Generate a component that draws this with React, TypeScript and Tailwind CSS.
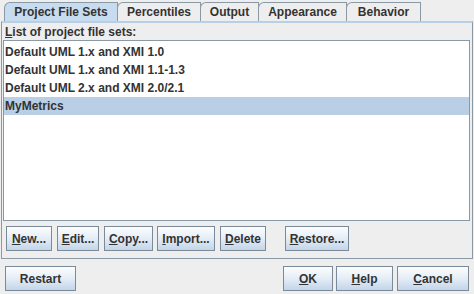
import React from "react";

const tabs = ["Project File Sets", "Percentiles", "Output", "Appearance", "Behavior"];
const tabWidths = [114, 84, 59, 89, 75];

const fileSets = [
  "Default UML 1.x and XMI 1.0",
  "Default UML 1.x and XMI 1.1-1.3",
  "Default UML 2.x and XMI 2.0/2.1",
  "MyMetrics",
];

function Btn({ label, mn, w, className = "" }: { label: string; mn: number; w: number; className?: string }) {
  return (
    <button
      style={{ width: w }}
      className={`h-[25px] shrink-0 border border-[#7a8a99] bg-gradient-to-b from-[#fbfdfe] via-[#e4edf6] to-[#c3d5e8] text-[12px] font-bold text-[#333333] flex items-center justify-center ${className}`}
    >
      {mn < 0 ? (
        label
      ) : (
        <>
          {label.slice(0, mn)}
          <span className="underline underline-offset-1">{label[mn]}</span>
          {label.slice(mn + 1)}
        </>
      )}
    </button>
  );
}

export default function App() {
  return (
    <div
      className="w-[474px] h-[294px] bg-[#eeeeee] text-[#333333] font-bold text-[12px] flex flex-col overflow-hidden"
      style={{ fontFamily: '"Liberation Sans", Arial, sans-serif' }}
    >
      {/* tab strip */}
      <div className="flex pl-[4px] pt-[2px] h-[21px]">
        {tabs.map((t, i) => (
          <div
            key={t}
            style={{ width: tabWidths[i] }}
            className={`h-[19px] flex items-center justify-center border-t border-r border-l border-[#8a99a6] rounded-tl-[6px] ${
              i === 0 ? "bg-[#c8dcef]" : "bg-[#eeeeee] -ml-px"
            }`}
          >
            {t}
          </div>
        ))}
      </div>

      {/* tab content */}
      <div className="mx-[1px] h-[238px] border border-[#8a99a6] border-t-[#b8cfe5] border-t-2 flex flex-col px-[1px]">
        <div className="h-[17px] pl-[2px] pt-[2px] leading-[14px]">
          <span className="underline underline-offset-1">L</span>ist of project file sets:
        </div>
        <div className="h-[181px] border border-[#8a99a6] bg-white mr-[1px] pt-[2px]">
          {fileSets.map((f, i) => (
            <div
              key={f}
              className={`h-[18px] flex items-center pl-px ${i === 3 ? "bg-[#b8cfe5]" : ""}`}
            >
              {f}
            </div>
          ))}
        </div>
        <div className="flex pl-[3px] pt-[5px]">
          <Btn label="New..." mn={0} w={46} />
          <Btn label="Edit..." mn={0} w={42} className="ml-[5px]" />
          <Btn label="Copy..." mn={0} w={49} className="ml-[5px]" />
          <Btn label="Import..." mn={0} w={58} className="ml-[4px]" />
          <Btn label="Delete" mn={0} w={46} className="ml-[5px]" />
          <Btn label="Restore..." mn={0} w={64} className="ml-[19px]" />
        </div>
      </div>

      {/* dialog buttons */}
      <div className="flex items-center px-[5px] pt-[7px]">
        <Btn label="Restart" mn={-1} w={71} />
        <div className="flex-1" />
        <Btn label="OK" mn={0} w={50} />
        <Btn label="Help" mn={0} w={57} className="ml-[3px]" />
        <Btn label="Cancel" mn={0} w={72} className="ml-[4px]" />
      </div>
    </div>
  );
}
